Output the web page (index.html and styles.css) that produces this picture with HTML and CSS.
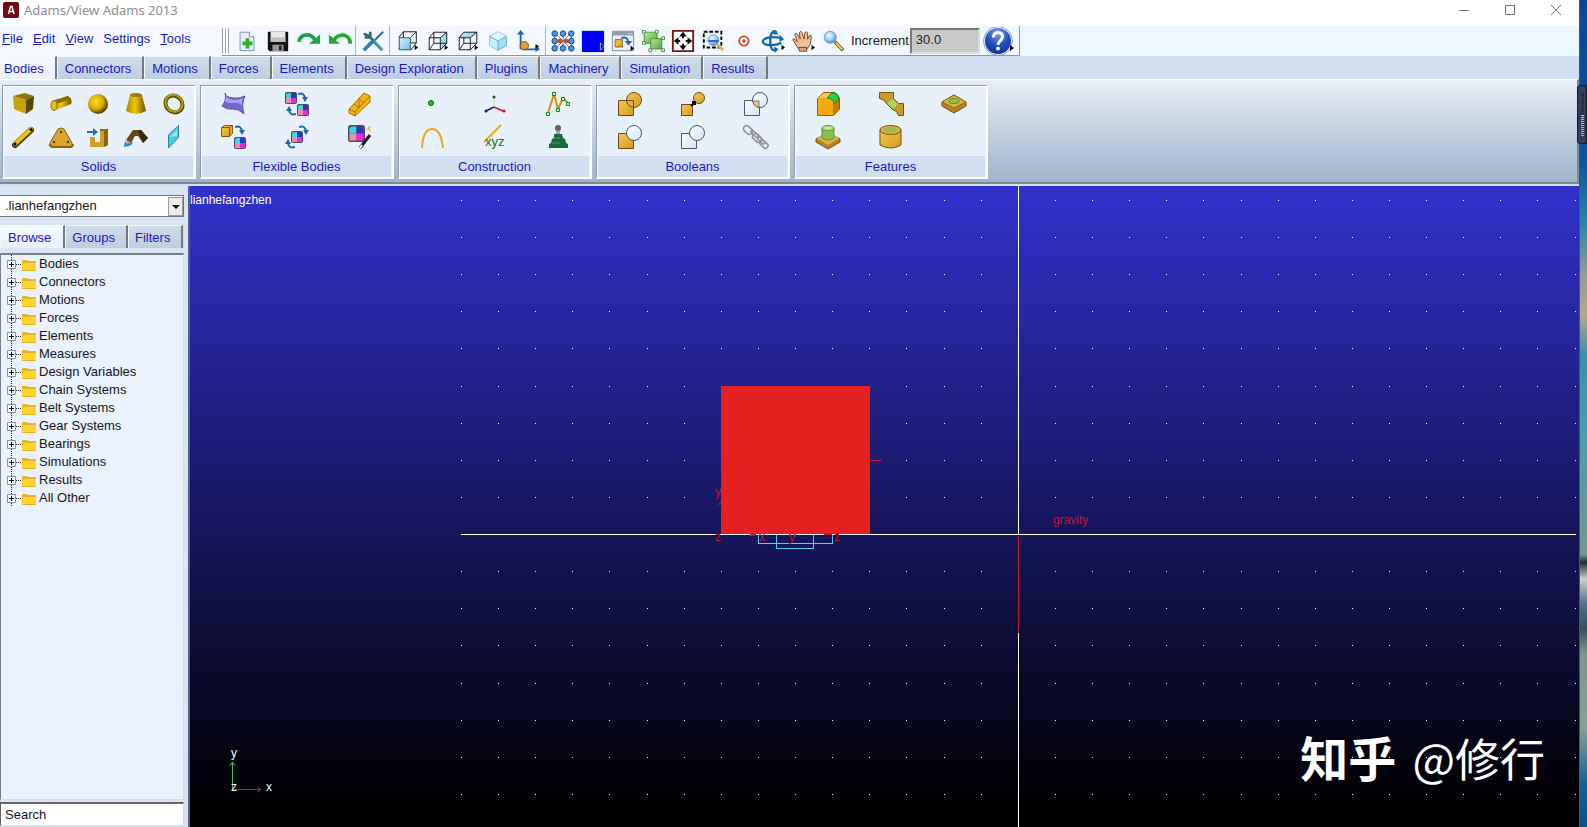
FILE: index.html
```html
<!DOCTYPE html>
<html lang="en">
<head>
<meta charset="utf-8">
<title>Adams/View Adams 2013</title>
<link rel="stylesheet" href="styles.css">
</head>
<body>
<svg class="defs" aria-hidden="true">
  <defs>
    <linearGradient id="gold" x1="0" y1="0" x2="1" y2="1"><stop offset="0" stop-color="#f7c94f"/><stop offset="1" stop-color="#d39a22"/></linearGradient>
    <linearGradient id="brass" x1="0" y1="0" x2="1" y2="0"><stop offset="0" stop-color="#a88403"/><stop offset=".45" stop-color="#f0c808"/><stop offset="1" stop-color="#6b5300"/></linearGradient>
    <radialGradient id="ball" cx=".4" cy=".38" r=".62"><stop offset="0" stop-color="#ffe41a"/><stop offset=".6" stop-color="#d2a808"/><stop offset="1" stop-color="#4e3c00"/></radialGradient>
    <linearGradient id="ice" x1="0" y1="0" x2="1" y2="1"><stop offset="0" stop-color="#d9f4fd"/><stop offset="1" stop-color="#6fc0e4"/></linearGradient>
    <linearGradient id="pale" x1="0" y1="0" x2="1" y2="1"><stop offset="0" stop-color="#ffffff"/><stop offset="1" stop-color="#cfe4fa"/></linearGradient>
    <radialGradient id="lens" cx=".4" cy=".35" r=".7"><stop offset="0" stop-color="#f2fbff"/><stop offset=".6" stop-color="#8ac4f0"/><stop offset="1" stop-color="#3c7dc4"/></radialGradient>
    <linearGradient id="grass" x1="0" y1="0" x2="1" y2="1"><stop offset="0" stop-color="#bfe89a"/><stop offset="1" stop-color="#4fa844"/></linearGradient>
    <radialGradient id="helpfill" cx=".5" cy=".2" r=".9"><stop offset="0" stop-color="#7da6ee"/><stop offset=".5" stop-color="#1f4fc0"/><stop offset="1" stop-color="#0b2a86"/></radialGradient>
    <linearGradient id="scene" x1="0" y1="0" x2="0" y2="1"><stop offset="0" stop-color="#3131cd"/><stop offset=".96" stop-color="#000002"/></linearGradient>
    <symbol id="fe" viewBox="0 0 12 12"><rect width="12" height="12" rx="2" fill="#50485a"/><path d="M1 2l2-1h3v5H1z" fill="#35d6e6"/><path d="M6 1h4l1 5H6z" fill="#2438c0"/><path d="M1 6h5v5H1z" fill="#f58ca8"/><path d="M6 6h5v5H6z" fill="#e62ce8"/></symbol>
    <symbol id="turn" viewBox="0 0 10 10"><path d="M0 2Q6 0 7 6" fill="none" stroke="#1768aa" stroke-width="2"/><path d="M4 5h6L7 10z" fill="#1768aa"/></symbol>
    <symbol id="more" viewBox="0 0 4 6"><path d="M0 0l4 3-4 3z" fill="#000"/></symbol>
  </defs>
</svg>

<div class="app">
  <header class="titlebar">
    <svg class="logo" viewBox="0 0 16 16"><rect width="16" height="16" rx="2" fill="#710a12"/><path d="M5.500 12L7.500 4.500h1.500L11 12M6.500 9.500h3.500" fill="none" stroke="#fff" stroke-width="1.500"/></svg>
    <h1>Adams/View Adams 2013</h1>
    <div class="winbuttons">
      <button aria-label="Minimize"><svg viewBox="0 0 12 12"><path d="M1 6.500h10"/></svg></button>
      <button aria-label="Maximize"><svg viewBox="0 0 12 12"><path d="M1.500 1.500h9v9h-9z"/></svg></button>
      <button aria-label="Close"><svg viewBox="0 0 12 12"><path d="M1 1l10 10M11 1L1 11"/></svg></button>
    </div>
  </header>

  <div class="menurow">
    <nav class="menu">
      <button><u>F</u>ile</button><button><u>E</u>dit</button><button><u>V</u>iew</button><button>Settings</button><button><u>T</u>ools</button>
    </nav>
    <div class="toolbar">
      <span class="grip"></span>
      <div class="group files">
        <button aria-label="New"><svg viewBox="0 0 26 26"><path d="M5.500 3.500h10l5 5v15h-15z" fill="#e9f1fe" stroke="#7189c4"/><path d="M15.500 3.500v5h5" fill="#fff" stroke="#7189c4"/><path d="M11.500 10h4v3.500H19v4h-3.500V21h-4v-3.500H8v-4h3.500z" fill="#2fae22"/></svg></button>
        <button aria-label="Save"><svg viewBox="0 0 26 26"><path d="M2 3h22v21H4l-2-2z" fill="#111"/><path d="M5 3h16v11H5z" fill="#e8e8e8"/><path d="M5 9h16v5H5z" fill="#bdbdbd"/><path d="M7 17h12v7H7z" fill="#9a9a9a"/><path d="M14 18h3v5h-3z" fill="#222"/></svg></button>
        <button aria-label="Redo"><svg viewBox="0 0 26 26"><path d="M2 14C4 4 16 4 20 13" fill="none" stroke="#1fa24a" stroke-width="4"/><path d="M13 16h12V6z" fill="#1fa24a"/></svg></button>
        <button aria-label="Undo"><svg viewBox="0 0 26 26"><path d="M24 16C24 4 10 4 6 13" fill="none" stroke="#27a53d" stroke-width="4"/><path d="M13 16H1V6z" fill="#27a53d"/></svg></button>
      </div>
      <div class="group tools">
        <button aria-label="Tools"><svg viewBox="0 0 26 26"><path d="M3 5l6 3 14 15M10 3v6H4" fill="none" stroke="#2f6d68" stroke-width="3"/><path d="M24 3L10 17" stroke="#26658c" stroke-width="2"/><path d="M12 14l-9 9" stroke="#1f86c0" stroke-width="4"/><path d="M14 12l9 11" stroke="#49a9c8" stroke-width="2"/></svg></button>
      </div>
      <div class="group views">
        <button aria-label="Front view"><svg viewBox="0 0 26 26"><path d="M3 9l5-6h14v12l-6 8M16 9l6-6M8 3v12h14M8 15l-5 7" fill="none" stroke="#111"/><path d="M3.500 9.500h12v13h-12z" fill="url(#ice)" stroke="#164e72"/><use href="#more" x="20" y="17" width="4" height="6"/></svg></button>
        <button aria-label="Right view"><svg viewBox="0 0 26 26"><path d="M16 9l6-6v12l-6 8z" fill="url(#ice)"/><path d="M3.500 9.500h12v13h-12zM3.500 9.500l5-6h14v12l-7 7M15.500 9.500l7-6M8.500 3.500v12h14M8.500 15.500l-5 7" fill="none" stroke="#111"/><use href="#more" x="20" y="17" width="4" height="6"/></svg></button>
        <button aria-label="Top view"><svg viewBox="0 0 26 26"><path d="M3 9l5-6h15l-7 6z" fill="url(#ice)"/><path d="M3.500 9.500h12v13h-12zM3.500 9.500l5-6h14v12l-7 7M15.500 9.500l7-6M8.500 9v6.500h14M8.500 15.500l-5 7" fill="none" stroke="#111"/><use href="#more" x="20" y="17" width="4" height="6"/></svg></button>
        <button aria-label="Isometric view"><svg viewBox="0 0 26 26"><path d="M13 3l9 5v10l-9 5-9-5V8z" fill="#a5dcf3" stroke="#57a9cf"/><path d="M4 8l9 5v10l-9-5z" fill="#c4ecfa"/><path d="M13 3l9 5-9 5-9-5z" fill="#dff6fd"/><path d="M4 8l9 5 9-5M13 13v10" fill="none" stroke="#57a9cf"/></svg></button>
        <button aria-label="Set view orientation"><svg viewBox="0 0 26 26"><path d="M5 22V4M7 22h16" fill="none" stroke="#1768aa" stroke-width="2"/><path d="M1 6l4-5 4 5zM21 18l5 4-5 3z" fill="#1768aa"/><circle cx="9" cy="18" r="4.500" fill="#dba032" stroke="#6e4d10"/><use href="#more" x="21" y="16" width="4" height="6"/></svg></button>
      </div>
      <div class="group scenes">
        <button aria-label="Working grid"><svg viewBox="0 0 26 26"><path d="M4 4l18 18M22 4L4 22M4 4v18M13 4v18M22 4v18M4 13h18" stroke="#777"/><g fill="#4c93e0" stroke="#123f8a"><circle cx="4" cy="5" r="3"/><circle cx="13" cy="5" r="3"/><circle cx="22" cy="5" r="3"/><circle cx="4" cy="13" r="3"/><circle cx="22" cy="13" r="3"/><circle cx="4" cy="21" r="3"/><circle cx="13" cy="21" r="3"/><circle cx="22" cy="21" r="3"/></g><g fill="#e0401a"><circle cx="9.500" cy="13" r="2.500"/><circle cx="16.500" cy="13" r="2.500"/></g></svg></button>
        <button aria-label="Background colour"><svg viewBox="0 0 26 26"><path d="M1 2h24v23H1z" fill="#0000f8"/><path d="M21 15l4 4-4 4z" fill="#000" stroke="#fff" stroke-width=".7"/></svg></button>
        <button aria-label="Window layout"><svg viewBox="0 0 26 26"><path d="M1.500 2.500h23v21h-23z" fill="#eef3fa" stroke="#7a8496"/><path d="M2 3h22v4H2z" fill="#8f9bb0"/><path d="M18 5h5" stroke="#fff" stroke-dasharray="1 1"/><path d="M4.500 11.500h8v8h-8z" fill="url(#gold)" stroke="#8a6416"/><path d="M11 10q7-3 8 5" fill="none" stroke="#1768aa" stroke-width="2"/><path d="M15 13h8l-4 5z" fill="#1768aa"/><use href="#more" x="21" y="18" width="4" height="6"/></svg></button>
        <button aria-label="Visibility"><svg viewBox="0 0 26 26"><path d="M3.500 3.500h14v12h-14z" fill="url(#grass)" stroke="#4b9440"/><path d="M10.500 10.500h12v11h-12z" fill="url(#grass)" stroke="#3d8a36"/><g fill="#fff" stroke="#3f8a35"><path d="M1.500 1.500h3v3h-3zM15.500 1.500h3v3h-3zM1.500 13.500h3v3h-3zM22.500 8.500h3v3h-3zM8.500 21.500h3v3h-3zM22.500 21.500h3v3h-3z"/></g></svg></button>
        <button aria-label="Fit view"><svg viewBox="0 0 26 26"><path d="M2 2h22v22H2z" fill="#fff" stroke="#7a1419" stroke-width="2"/><path d="M13 3l4 5H9zM13 23l-4-5h8zM3 13l5-4v8zM23 13l-5 4V9z"/><path d="M13 7v3M13 16v3M7 13h3M16 13h3" stroke="#000" stroke-width="2"/></svg></button>
        <button aria-label="Zoom box"><svg viewBox="0 0 26 26"><path d="M3 3h19v17H3z" fill="none" stroke="#000" stroke-width="2" stroke-dasharray="4 2"/><path d="M18 17l6 6" stroke="#e2b04a" stroke-width="3"/><circle cx="13.500" cy="12" r="6" fill="url(#lens)" stroke="#7fa8d0"/><path d="M8 13h11" stroke="#2b65ad" stroke-width="2"/></svg></button>
        <button aria-label="Center view"><svg viewBox="0 0 26 26"><circle cx="14" cy="13" r="5" fill="#fff" stroke="#e2452b" stroke-width="2"/><circle cx="14" cy="13" r="1.800" fill="#e2452b"/></svg></button>
        <button aria-label="Rotate view"><svg viewBox="0 0 26 26"><g fill="none" stroke="#1768aa" stroke-width="2.500"><path d="M22 10C12 7 1 10 2 14s12 5 20 1"/><path d="M17 4c-3-4-7 0-7 8s2 13 6 10"/></g><path d="M20 6l5 5-5 3zM15 1l4 5h-6zM14 19l5 3-4 4z" fill="#1768aa"/><use href="#more" x="22" y="17" width="4" height="6"/></svg></button>
        <button aria-label="Pan view"><svg viewBox="0 0 26 26"><path d="M8 21L2 12q0-2 2-1l3 3-3-8q1-3 3 0l3 5-1-7q2-3 3 0l2 7 1-7q2-2 3 0v7l2-4q2-1 2 1l-1 8-3 5z" fill="#f0bf98" stroke="#6e4126"/><path d="M8 20h9v4H9z" fill="#dca47a" stroke="#6e4126"/><use href="#more" x="22" y="17" width="4" height="6"/></svg></button>
        <button aria-label="Zoom"><svg viewBox="0 0 26 26"><path d="M15 14l9 9" stroke="#8a6420" stroke-width="4"/><path d="M16 15l7 7" stroke="#f4cd60" stroke-width="2"/><circle cx="10" cy="9" r="6.500" fill="url(#lens)" stroke="#8195ad"/></svg></button>
        <label for="increment">Increment</label>
        <input id="increment" type="text" value="30.0">
        <button class="help" aria-label="Help"><svg viewBox="0 0 32 28"><circle cx="16" cy="14" r="14.500" fill="#e9eef8" stroke="#8ea1c4"/><circle cx="16" cy="14" r="13" fill="url(#helpfill)"/><path d="M11.500 10.500q0-5 4.500-5t4.500 4.500q0 2-2.500 4-2 1.500-2 4" fill="none" stroke="#fff" stroke-width="3"/><circle cx="16" cy="21.500" r="2" fill="#fff"/><path d="M28 18l4 3-4 3z"/></svg></button>
      </div>
    </div>
  </div>

  <nav class="tabs">
    <button class="active">Bodies</button><button>Connectors</button><button>Motions</button><button>Forces</button><button>Elements</button><button>Design Exploration</button><button>Plugins</button><button>Machinery</button><button>Simulation</button><button>Results</button>
  </nav>

  <div class="ribbon">
    <section class="panel">
      <div class="icons five">
        <button aria-label="Box"><svg viewBox="0 0 28 28"><path d="M4 6l12-3 9 3-8 4z" fill="#8f7605"/><path d="M4 6l13 4v14L5 19z" fill="#c5a205"/><path d="M17 10l8-4-1 13-7 5z" fill="#5b4800"/></svg></button>
        <button aria-label="Cylinder"><svg viewBox="0 0 28 28"><path d="M5 11l16-5q5 3 3 8L9 20z" fill="url(#brass)"/><path d="M5 11L21 6l3 3-15 5z" fill="#8a6c02"/><ellipse cx="7" cy="15.500" rx="3" ry="5" fill="#eec40b" stroke="#8a6c02"/></svg></button>
        <button aria-label="Sphere"><svg viewBox="0 0 28 28"><circle cx="14" cy="14" r="10" fill="url(#ball)"/></svg></button>
        <button aria-label="Frustum"><svg viewBox="0 0 28 28"><path d="M8 5L4 21q10 6 20 0L20 5q-6-3-12 0z" fill="url(#brass)"/><ellipse cx="14" cy="5" rx="6" ry="2" fill="#9b7c04"/></svg></button>
        <button aria-label="Torus"><svg viewBox="0 0 28 28"><ellipse cx="14" cy="14" rx="9" ry="8" fill="none" stroke="#5c4b02" stroke-width="4" transform="rotate(45 14 14)"/><ellipse cx="13.500" cy="13.500" rx="9" ry="8" fill="none" stroke="#b59a16" stroke-width="2" transform="rotate(45 14 14)"/></svg></button>
        <button aria-label="Link"><svg viewBox="0 0 28 28"><path d="M6 22L22 7" stroke="#4b3a00" stroke-width="6" stroke-linecap="round"/><path d="M6 21L22 6" stroke="#efc00c" stroke-width="4" stroke-linecap="round"/><circle cx="22" cy="6.500" r="1.500"/><circle cx="6" cy="21" r="1.500"/></svg></button>
        <button aria-label="Plate"><svg viewBox="0 0 28 28"><path d="M11 6q3-2 6 0l8 14q1 4-3 4H5q-4 0-2-4z" fill="#dda62a" stroke="#8b6210"/><path d="M3 21q1 3 3 3h17q3 0 3-3" fill="none" stroke="#8b6210" stroke-width="2"/><circle cx="14" cy="9" r="1.300" fill="#5e4100"/><circle cx="7" cy="19" r="1.300" fill="#5e4100"/><circle cx="21" cy="19" r="1.300" fill="#5e4100"/></svg></button>
        <button aria-label="Extrusion"><svg viewBox="0 0 28 28"><path d="M16 6h8v16l-4 2H6V14h5v5h5z" fill="#d09f2c"/><path d="M20 8l4-2v16l-4 2zM16 6h8l-4 2h-4z" fill="#8f6512"/><path d="M3 9h8" stroke="#2f6fae" stroke-width="2"/><path d="M9 5l5 4-5 4z" fill="#2f6fae"/></svg></button>
        <button aria-label="Revolution"><svg viewBox="0 0 28 28"><path d="M4 17l7-10h8l7 8-5 5-5-7h-3L9 20z" fill="#684a17"/><path d="M16 8l3-1 7 8-5 5z" fill="#3a2809"/><path d="M3 16l6 3-2 3z" fill="#c69236"/><path d="M5 21q3 2 5-2" stroke="#2f80c8" stroke-width="2" fill="none"/><path d="M3 18l4 5-5 1z" fill="#2f80c8"/></svg></button>
        <button aria-label="Plane"><svg viewBox="0 0 28 28"><path d="M8.500 12L18.500 2.500v12L8.500 25z" fill="#4fc7e8" stroke="#2187a6"/><path d="M10 14l7-7v6z" fill="#9be4f5"/></svg></button>
      </div>
      <h2>Solids</h2>
    </section>
    <section class="panel">
      <div class="icons three">
        <button aria-label="Flexible body"><svg viewBox="0 0 28 28"><path d="M5 3q0 4 8 5 6 1 12-2-4 8-1 18-5-5-11-5-6 1-11-3 5-6 3-13z" fill="#7468d0" stroke="#5b4fb0"/><path d="M6 6q3 4 9 4 4 0 8-2-2 4-1 7-5-3-10-2-5 0-7-2 1-3 1-5z" fill="#aaa2f0"/></svg></button>
        <button aria-label="Rigid to flex"><svg viewBox="0 0 28 28"><use href="#fe" x="2" y="2" width="12" height="12"/><use href="#fe" x="14" y="14" width="12" height="12"/><use href="#turn" x="15" y="2" width="10" height="10"/><use href="#turn" x="15" y="2" width="10" height="10" transform="rotate(180 14 14)"/></svg></button>
        <button aria-label="Flex beam"><svg viewBox="0 0 28 28"><path d="M3 19L18 3l6 3v6L9 26l-6-3z" fill="#f5b60c" stroke="#a86f04"/><path d="M3 19l6 3L24 6M9 22v4M8 14l5 4M13 9l5 4M13 18v-7" fill="none" stroke="#a86f04"/></svg></button>
        <button aria-label="Box to flex"><svg viewBox="0 0 28 28"><path d="M1.500 4.500l3-2h8v8l-3 3h-8z" fill="url(#gold)" stroke="#805a12"/><path d="M1.500 4.500h8v9M9.500 4.500l3-2" fill="none" stroke="#805a12"/><use href="#turn" x="15" y="2" width="10" height="10"/><use href="#fe" x="14" y="14" width="12" height="12"/></svg></button>
        <button aria-label="Swap flex"><svg viewBox="0 0 28 28"><use href="#fe" x="8" y="8" width="12" height="12"/><use href="#turn" x="16" y="2" width="10" height="10"/><use href="#turn" x="16" y="2" width="10" height="10" transform="rotate(180 14 14)"/></svg></button>
        <button aria-label="Flex wizard"><svg viewBox="0 0 28 28"><use href="#fe" x="2" y="2" width="17" height="17"/><path d="M14 25L24 12" stroke="#222" stroke-width="3"/><path d="M14 25l2-3" stroke="#fff" stroke-width="2"/><path d="M23 3v3M20 7l5-3M25 8l-3-2" stroke="#e0b21c"/></svg></button>
      </div>
      <h2>Flexible Bodies</h2>
    </section>
    <section class="panel">
      <div class="icons three">
        <button aria-label="Point"><svg viewBox="0 0 28 28"><circle cx="13" cy="13" r="2.500" fill="#22c01c" stroke="#087008"/></svg></button>
        <button aria-label="Marker"><svg viewBox="0 0 28 28"><path d="M13 17l-8 4" stroke="#14147c" stroke-width="1.500"/><path d="M13 17l9 4" stroke="#c0182c" stroke-width="1.500"/><path d="M13 17V9" stroke="#b8d8c0"/><circle cx="13" cy="7" r="1.500" fill="#0c5a18"/><circle cx="5" cy="21" r="1.500" fill="#14147c"/><circle cx="23" cy="21" r="1.500" fill="#c0182c"/></svg></button>
        <button aria-label="Polyline"><svg viewBox="0 0 28 28"><path d="M4 23L10 4l4 15 5-11 5 5" fill="none" stroke="#cf9410" stroke-width="2"/><g fill="#c8f4c0" stroke="#13891c"><path d="M2.500 22.500h3v3h-3zM8.500 2.500h3v3h-3zM12.500 18.500h3v3h-3zM17.500 7.500h3v3h-3zM22.500 12.500h3v3h-3z"/></g></svg></button>
        <button aria-label="Arc"><svg viewBox="0 0 28 28"><path d="M4 25Q5 6 14 6t11 19" fill="none" stroke="#f0a50a" stroke-width="2"/></svg></button>
        <button aria-label="Spline"><svg viewBox="0 0 28 28"><path d="M3 19L20 2" stroke="#e3aa17" stroke-width="2"/><text class="xyz" x="4" y="23">xyz</text></svg></button>
        <button aria-label="Point mass"><svg viewBox="0 0 28 28"><circle cx="14" cy="5" r="3" fill="#5d6065"/><path d="M12 8h4v3h-4z" fill="#9ba3a3"/><path d="M10 11h8l1 4 2 1 1 4 2 1v4H5v-4l2-1 1-4 2-1z" fill="#166b3c"/><path d="M10 15h6M8 20h8" stroke="#4ba36d"/></svg></button>
      </div>
      <h2>Construction</h2>
    </section>
    <section class="panel">
      <div class="icons three">
        <button aria-label="Unite"><svg viewBox="0 0 28 28"><g fill="url(#gold)" stroke="#6b4b12"><path d="M2.500 10.500h15v15h-15z"/><circle cx="18" cy="10" r="7.500"/><path d="M10.500 10.500h7v7" fill="none"/></g></svg></button>
        <button aria-label="Merge"><svg viewBox="0 0 28 28"><g fill="url(#gold)" stroke="#6b4b12"><path d="M2.500 14.500h11v11h-11z"/><circle cx="20" cy="8" r="5.500"/></g><path d="M12 16l4-4M13 12h3v3" stroke="#000" stroke-width="2" fill="none"/></svg></button>
        <button aria-label="Intersect"><svg viewBox="0 0 28 28"><path d="M2.500 10.500h15v15h-15z" fill="url(#pale)" stroke="#4d5470"/><circle cx="18" cy="10" r="7.500" fill="url(#pale)" stroke="#4d5470"/><path d="M11 11h6v6q-5 0-6-6z" fill="#e3c88b" stroke="#8a7650"/></svg></button>
        <button aria-label="Cut"><svg viewBox="0 0 28 28"><path d="M2.500 10.500h15v15h-15z" fill="url(#gold)" stroke="#6b4b12"/><circle cx="18" cy="10" r="7.500" fill="url(#pale)" stroke="#4d5470"/></svg></button>
        <button aria-label="Split"><svg viewBox="0 0 28 28"><path d="M2.500 10.500h15v15h-15z" fill="url(#pale)" stroke="#4d5470"/><circle cx="18" cy="10" r="7.500" fill="url(#pale)" stroke="#4d5470"/></svg></button>
        <button aria-label="Chain"><svg viewBox="0 0 28 28"><g fill="none" stroke="#8e9096" stroke-width="1.500"><rect x="1" y="4" width="10" height="6" rx="3" transform="rotate(42 6 7)"/><rect x="8" y="9" width="9" height="3" rx="1" transform="rotate(42 12 11)"/><rect x="10" y="12" width="10" height="6" rx="3" transform="rotate(42 15 15)"/><rect x="15" y="16" width="8" height="3" rx="1" transform="rotate(42 19 18)"/><rect x="17" y="19" width="9" height="5" rx="2" transform="rotate(42 22 22)"/></g></svg></button>
      </div>
      <h2>Booleans</h2>
    </section>
    <section class="panel">
      <div class="icons three">
        <button aria-label="Fillet"><svg viewBox="0 0 28 28"><path d="M3.500 8.500l6-6h11q4 2 5 6v11l-6 6h-16z" fill="#f2a912" stroke="#8e5e06"/><path d="M19 14l6-5v10l-6 6z" fill="#c07f08"/><path d="M4 8l6-5h7l-4 5z" fill="#f8c950"/><path d="M13 8l5-5h3q4 3 4 6l-5 5q0-6-7-6z" fill="#2bd13c" stroke="#13861d"/></svg></button>
        <button aria-label="Chamfer"><svg viewBox="0 0 28 28"><path d="M2.500 2.500h14v6l5 5h5v12h-5q-1-5-6-6l-7-7q0-3-6-4z" fill="#cd982c" stroke="#72500e"/><path d="M15 9l6 5-5 5-6-6z" fill="#a4dc62"/></svg></button>
        <button aria-label="Hole"><svg viewBox="0 0 28 28"><path d="M2 12l12-7 12 7v4l-12 7-12-7z" fill="#b88421" stroke="#72500e"/><path d="M2 12l12-7 12 7-12 6z" fill="#dbb04d" stroke="#8e671a"/><ellipse cx="14" cy="11" rx="5" ry="2.500" fill="#8fc54b" stroke="#75822a"/></svg></button>
        <button aria-label="Boss"><svg viewBox="0 0 28 28"><path d="M2 16l12-6 12 6v3l-12 7-12-7z" fill="#b88421" stroke="#72500e"/><path d="M2 15l12-6 12 6-12 7z" fill="#dbb04d"/><path d="M8 5v10q6 4 12 0V5z" fill="#87bf51" stroke="#5f9339"/><ellipse cx="14" cy="5" rx="6" ry="2.500" fill="#bce591" stroke="#5f9339"/></svg></button>
        <button aria-label="Shell"><svg viewBox="0 0 28 28"><path d="M3 7v15q11 6 21 0V7z" fill="url(#gold)" stroke="#72500e"/><ellipse cx="13.500" cy="7" rx="10.500" ry="4.500" fill="#e0b450" stroke="#72500e"/><ellipse cx="13.500" cy="7" rx="7.500" ry="3" fill="#9cba4a"/></svg></button>
      </div>
      <h2>Features</h2>
    </section>
  </div>

  <main class="work">
    <aside class="sidebar">
      <div class="combo">
        <select aria-label="Model"><option>.lianhefangzhen</option></select>
        <span class="drop"><svg viewBox="0 0 8 4"><path d="M0 0h8L4 4z"/></svg></span>
      </div>
      <nav class="tabs side">
        <button class="active">Browse</button><button>Groups</button><button>Filters</button>
      </nav>
      <ul class="tree">
        <li>Bodies</li><li>Connectors</li><li>Motions</li><li>Forces</li><li>Elements</li><li>Measures</li><li>Design Variables</li><li>Chain Systems</li><li>Belt Systems</li><li>Gear Systems</li><li>Bearings</li><li>Simulations</li><li>Results</li><li>All Other</li>
      </ul>
      <input class="search" type="text" aria-label="Search" value="Search">
    </aside>
    <div class="viewport">
      <svg class="scene" viewBox="190 186 1389 641" preserveAspectRatio="xMinYMin slice">
        <rect x="190" y="186" width="1389" height="641" fill="url(#scene)"/>
        <g id="grid" fill="#fff"></g>
        <g shape-rendering="crispEdges">
          <path d="M721 386h149v148H721z" fill="#e52020"/>
          <path d="M870 460.500h12" stroke="#c01838"/>
          <path d="M758.500 534v9.500h74V534M776.500 534v14.500h37V534" fill="none" stroke="#4fd0f4"/>
          <path d="M461 534.500h1114M1018.500 186v641" stroke="#fff"/>
          <path d="M1018.500 535v98" stroke="#c4142e"/>
          <path d="M750 534.500h6M824 533.500h8" stroke="#c4142e" stroke-width="2"/>
        </g>
        <path d="M719 505l2-4M789 535l3-2M795 537v-3" stroke="#c4142e" fill="none"/>
        <g class="red">
          <text x="715" y="496">y</text><text x="715" y="541">z</text><text x="759" y="541">x</text><text x="789" y="541">y</text><text x="834" y="541">z</text>
          <text x="1053" y="524">gravity</text>
        </g>
        <path d="M232.500 790v-27M230 766l2.500-4 2.500 4" fill="none" stroke="#4ec04e"/>
        <path d="M233 789.500h27M257 787l4 2.500-4 2.500" fill="none" stroke="#c02828"/>
        <g class="white">
          <text x="190" y="204">lianhefangzhen</text>
          <text x="231" y="757">y</text><text x="231" y="791">z</text><text x="266" y="791">x</text>
        </g>
      </svg>
      <p class="watermark" lang="zh"><b>知乎</b> @修行</p>
    </div>
  </main>
</div>

<aside class="desktop"><div class="gadget"><span></span></div></aside>
<script src="grid.js"></script>
</body>
</html>
```
FILE: grid.js
```js
// Working grid: 31 x 17 points, snapped to whole pixels.
const ns = 'http://www.w3.org/2000/svg';
const grid = document.getElementById('grid');
const pitch = 37.12;
for (let row = 0; row < 17; row++) {
  for (let col = 0; col < 31; col++) {
    const dot = document.createElementNS(ns, 'rect');
    dot.setAttribute('x', Math.round(461 + col * pitch));
    dot.setAttribute('y', Math.round(200 + row * pitch));
    dot.setAttribute('width', 1);
    dot.setAttribute('height', 1);
    grid.appendChild(dot);
  }
}

// Expander box and folder in front of each tree entry.
for (const item of document.querySelectorAll('.tree li')) {
  const icon = document.createElementNS(ns, 'svg');
  icon.setAttribute('viewBox', '0 0 30 18');
  icon.innerHTML =
    '<path d="M4.500 0v18M9 9.500h5" stroke="#222" stroke-dasharray="1 1"/>' +
    '<path d="M.5 5.500h8v8h-8z" fill="#fff" stroke="#8494ae"/>' +
    '<path d="M2 9.500h5M4.500 7v5" stroke="#000"/>' +
    '<path d="M15 5h5l1 1h8v10H15z" fill="#e9b322"/>' +
    '<path d="M16 8h13v7H15z" fill="#ffd42e"/>';
  item.prepend(icon);
}
```
FILE: styles.css
```css
* { box-sizing: border-box; }

body {
  display: flex;
  height: 100vh;
  margin: 0;
  overflow: hidden;
  font: 13px/18px "Liberation Sans", Arial, sans-serif;
  color: #16161c;
}

button {
  margin: 0;
  padding: 0;
  border: 0;
  background: none;
  font: inherit;
  color: #1a18c0;
}

.defs { position: absolute; width: 0; height: 0; }

.app { display: flex; flex: 1; flex-direction: column; min-width: 0; background: #fff; }

/* Title bar */
.titlebar { display: flex; align-items: center; height: 26px; padding: 0 0 6px 3px; gap: 5px; }
.logo { width: 16px; height: 16px; }
.titlebar h1 { flex: 1; margin: 0; font: 13px/18px "Noto Sans", "Open Sans", sans-serif; color: #8e8e8e; }
.winbuttons { display: flex; }
.winbuttons button { display: grid; place-items: center; width: 46px; height: 20px; }
.winbuttons svg { width: 12px; height: 12px; fill: none; stroke: #777; }

/* Menu and toolbar */
.menurow { display: flex; height: 30px; background: #edf7fe; }
.menu { display: flex; align-items: flex-start; gap: 10px; width: 222px; padding: 4px 2px; background: #f4faff; }
.toolbar { display: flex; border-right: 1px solid #8b95a3; border-bottom: 1px solid #8b95a3; background: #f2f8fe; }
.grip { width: 7px; margin: 2px 2px 2px 0; border: solid #9aa2ae; border-width: 0 1px; background: linear-gradient(90deg, #fff 40%, #9aa2ae 40% 60%, #fff 60%); }
.group { display: flex; align-items: center; border-left: 1px solid #aab4c2; }
.files { border-left: 0; }
.group button { display: grid; place-items: center; width: 30px; height: 28px; }
.group svg { width: 24px; height: 24px; }
.files button { width: 31px; }
.tools button { width: 33px; }
.views { padding: 0 2px 0 3px; }
.scenes { padding: 0 2px; }
.scenes label { margin: 0 1px 0 3px; }
.scenes input {
  width: 70px; height: 26px; padding: 0 4px 3px; border: 2px solid;
  border-color: #777 #ddd #ddd #777; background: #c8c8c8; font: inherit; color: #222;
}
.scenes .help { width: 37px; }
.scenes .help svg { width: 32px; height: 28px; }

/* Tab strips */
.tabs { display: flex; height: 23px; background: #d2dff0; }
.tabs button {
  padding: 2px 11px 0 7px; border: 1px solid #f4f8fc; border-right: 2px solid #75797f;
  border-bottom: 0; background: linear-gradient(#d0dcea, #bfcee1); white-space: nowrap;
}
.tabs .active { padding: 2px 11px 0 3px; background: linear-gradient(#f4f9ff, #e8f0fa); }

/* Ribbon */
.ribbon {
  display: flex; gap: 4px; padding: 5px 2px 3px; border: solid #7b8794; border-width: 0 2px 2px 0;
  border-top: 1px solid #fff; background: linear-gradient(#e8eef8, #c5d3e1 45%, #9fb4cc);
}
.panel {
  width: 194px; border: 1px solid #8d99a8; border-right: 2px solid #fff;
  border-bottom: 2px solid #fff; background: #e8f0f9; box-shadow: inset 1px 1px #fff;
}
.icons { display: grid; grid-auto-rows: 33px; padding: 1px 1px 3px; }
.five { grid-template-columns: repeat(5, 1fr); }
.three { grid-template-columns: repeat(3, 1fr); }
.icons button { display: grid; place-items: center; }
.icons svg { width: 28px; height: 28px; }
.xyz { font: 13px "Liberation Sans", Arial, sans-serif; fill: #15751a; }
.panel h2 { margin: 0 1px; padding: 2px 0 1px; background: #d2dff0; font-size: 13px; font-weight: 400; line-height: 18px; text-align: center; color: #1a18c0; }

/* Work area */
.work { display: flex; flex: 1; min-height: 0; padding-top: 2px; background: #d4e0f0; }
.sidebar {
  display: flex; flex-direction: column; width: 190px; padding: 9px 4px 1px 0;
  border-right: 2px solid #52608e; background: #d9e5f3;
}
.combo { position: relative; height: 22px; border: 1px solid #6d7580; border-left: 0; background: #fff; }
.combo select { width: 100%; height: 20px; padding: 0 5px; border: 0; background: #fff; appearance: none; font: inherit; color: inherit; }
.drop { position: absolute; top: 1px; right: 0; display: grid; place-items: center; width: 15px; height: 19px; border: 1px solid #999; background: #ededed; pointer-events: none; }
.drop svg { width: 8px; height: 4px; }
.side { margin-top: 8px; }
.side .active { padding: 1px 12px 0 7px; }
.side button { padding: 1px 11px 0 6px; }
.tree {
  flex: 1; margin: 5px 0 0; padding: 0 0 0 6px; border: 1px solid #d4dce8;
  border-top: 2px solid #777f8c; border-left: 1px solid #777f8c; background: #eaf2fd; list-style: none; line-height: 18px;
}
.tree li { display: flex; gap: 2px; height: 18px; }
.tree svg { width: 30px; height: 18px; }
.search { height: 24px; margin-top: 2px; padding: 0 4px; border: 1px solid #d4dce8; border-top: 2px solid #666; border-left-color: #666; font: inherit; color: inherit; }

.viewport { position: relative; flex: 1; min-width: 0; overflow: hidden; background: #000; }
.scene { display: block; width: 100%; height: 100%; }
.scene text { font: 12px "Liberation Sans", Arial, sans-serif; }
.red { fill: #c4142e; }
.white { fill: #fff; }
.watermark {
  position: absolute; right: 34px; bottom: 37px; margin: 0;
  font: 45px/64px "Noto Sans CJK SC", sans-serif; color: #fff;
}
.watermark b { margin-right: 6px; font-size: 48px; }

/* Desktop showing past the window edge */
.desktop {
  position: relative; width: 8px; border-left: 1px solid #315a80;
  background: linear-gradient(#0b4694, #10559c 20%, #2a86a4 27%, #8f9c94 33%, #b3a88a 38%, #3d8eaa 43%, #4c9caf 52%, #75978f 67%, #1e3035 68%, #cbd3cc 70%, #53708c 73%, #344f5c 76%, #7e948c 79%, #86a098 88%, #12618f 95%, #0c5285);
}
.gadget { position: absolute; top: 85px; right: 0; width: 10px; height: 59px; padding: 7px 2px 6px 3px; border: 1px solid #14182c; border-radius: 3px 0 0 3px; background: #343e5c; }
.gadget span { display: block; height: 100%; background: repeating-linear-gradient(transparent 0 1px, #343e5c 1px 2px), linear-gradient(#1c2238 50%, #b6dc94 50%, #58c8c0); }
```
